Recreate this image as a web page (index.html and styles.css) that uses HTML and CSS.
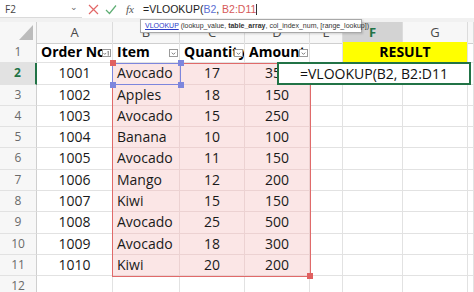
FILE: index.html
```html
<!DOCTYPE html>
<html lang="en">
<head>
    <meta charset="UTF-8">
    <title>VLOOKUP</title>
    <link rel="stylesheet" href="styles.css">
</head>
<body>
<div class="app">
    <!-- formula bar -->
    <div class="fbar">
        <div class="namebox"><span>F2</span><span class="caret">&#8964;</span></div>
        <div class="fbtns">
            <svg class="ico" width="11" height="11" viewBox="0 0 11 11"><path d="M1 1 L10 10 M10 1 L1 10" stroke="#e26868" stroke-width="1.2" fill="none"/></svg>
            <svg class="ico" width="12" height="11" viewBox="0 0 12 11"><path d="M1 6 L4.5 9.5 L11 1.5" stroke="#5fae74" stroke-width="1.2" fill="none"/></svg>
            <span class="fx">fx</span>
        </div>
        <div class="finput">=VLOOKUP(<span class="ref-b">B2</span>, <span class="ref-r">B2:D11</span><span class="cursor"></span></div>
    </div>
    <div class="tip"><span class="fn">VLOOKUP</span> (lookup_value, <b>table_array</b>, col_index_num, [range_lookup])</div>
    <div class="band"></div>

    <div class="sheet">
        <div class="row hdr">
            <div class="rh corner"><svg width="16" height="17" viewBox="0 0 16 17"><polygon points="15,1 15,16 1,16" fill="#bcbcbc"/></svg></div>
            <div class="ch">A</div><div class="ch">B</div><div class="ch">C</div><div class="ch">D</div>
            <div class="ch">E</div><div class="ch sel">F</div><div class="ch">G</div><div class="ch"></div>
        </div>
        <div class="row">
            <div class="rh">1</div>
            <div class="c th">Order No<span class="flt"><svg width="8" height="7" viewBox="0 0 8 7"><path d="M0.5 3 L2 4.5 L3.5 3" stroke="#444" stroke-width="0.8" fill="none"/><path d="M6 1 V6 M5 2 L6 1" stroke="#444" stroke-width="0.8" fill="none"/></svg></span></div>
            <div class="c th">Item<span class="flt"><svg width="8" height="7" viewBox="0 0 8 7"><path d="M2 2.5 L4 4.5 L6 2.5" stroke="#444" stroke-width="0.8" fill="none"/></svg></span></div>
            <div class="c th">Quantity<span class="flt"><svg width="8" height="7" viewBox="0 0 8 7"><path d="M2 2.5 L4 4.5 L6 2.5" stroke="#444" stroke-width="0.8" fill="none"/></svg></span></div>
            <div class="c th">Amount<span class="flt"><svg width="8" height="7" viewBox="0 0 8 7"><path d="M2 2.5 L4 4.5 L6 2.5" stroke="#444" stroke-width="0.8" fill="none"/></svg></span></div>
            <div class="c"></div>
            <div class="c result">RESULT</div>
            <div class="c"></div>
        </div>
        <div class="row">
            <div class="rh on">2</div>
            <div class="c n">1001</div><div class="c p">Avocado</div><div class="c p n">17</div><div class="c p n">350</div>
            <div class="c"></div><div class="c"></div><div class="c"></div><div class="c"></div>
        </div>
        <div class="row">
            <div class="rh">3</div>
            <div class="c n">1002</div><div class="c p">Apples</div><div class="c p n">18</div><div class="c p n">150</div>
            <div class="c"></div><div class="c"></div><div class="c"></div><div class="c"></div>
        </div>
        <div class="row">
            <div class="rh">4</div>
            <div class="c n">1003</div><div class="c p">Avocado</div><div class="c p n">15</div><div class="c p n">250</div>
            <div class="c"></div><div class="c"></div><div class="c"></div><div class="c"></div>
        </div>
        <div class="row">
            <div class="rh">5</div>
            <div class="c n">1004</div><div class="c p">Banana</div><div class="c p n">10</div><div class="c p n">100</div>
            <div class="c"></div><div class="c"></div><div class="c"></div><div class="c"></div>
        </div>
        <div class="row">
            <div class="rh">6</div>
            <div class="c n">1005</div><div class="c p">Avocado</div><div class="c p n">11</div><div class="c p n">150</div>
            <div class="c"></div><div class="c"></div><div class="c"></div><div class="c"></div>
        </div>
        <div class="row">
            <div class="rh">7</div>
            <div class="c n">1006</div><div class="c p">Mango</div><div class="c p n">12</div><div class="c p n">200</div>
            <div class="c"></div><div class="c"></div><div class="c"></div><div class="c"></div>
        </div>
        <div class="row">
            <div class="rh">8</div>
            <div class="c n">1007</div><div class="c p">Kiwi</div><div class="c p n">15</div><div class="c p n">150</div>
            <div class="c"></div><div class="c"></div><div class="c"></div><div class="c"></div>
        </div>
        <div class="row">
            <div class="rh">9</div>
            <div class="c n">1008</div><div class="c p">Avocado</div><div class="c p n">25</div><div class="c p n">500</div>
            <div class="c"></div><div class="c"></div><div class="c"></div><div class="c"></div>
        </div>
        <div class="row">
            <div class="rh">10</div>
            <div class="c n">1009</div><div class="c p">Avocado</div><div class="c p n">18</div><div class="c p n">300</div>
            <div class="c"></div><div class="c"></div><div class="c"></div><div class="c"></div>
        </div>
        <div class="row">
            <div class="rh">11</div>
            <div class="c n">1010</div><div class="c p">Kiwi</div><div class="c p n">20</div><div class="c p n">200</div>
            <div class="c"></div><div class="c"></div><div class="c"></div><div class="c"></div>
        </div>
        <div class="row">
            <div class="rh">12</div>
            <div class="c"></div><div class="c"></div><div class="c"></div><div class="c"></div>
            <div class="c"></div><div class="c"></div><div class="c"></div><div class="c"></div>
        </div>

        <!-- reference highlights drawn over the grid -->
        <div class="range"></div>
        <div class="b2box"></div>
        <div class="hd red tl"></div>
        <div class="hd red br"></div>
        <div class="hd blue b2tr"></div>
        <div class="hd blue b2bl"></div>
        <div class="hd blue b2br"></div>

        <div class="editor">=VLOOKUP(B2, B2:D11</div>
    </div>
</div>
</body>
</html>
```

FILE: styles.css
```css
body {
    margin: 0;
    background: #fff;
    font-family: "Open Sans", sans-serif;
    color: #222;
    overflow: hidden;
}
.app {
    position: relative;
    width: 474px;
    height: 292px;
    overflow: hidden;
}

/* formula bar */
.fbar {
    display: flex;
    align-items: center;
    height: 18px;
    font-size: 10px;
    background: #fff;
}
.namebox {
    width: 82px;
    display: flex;
    justify-content: space-between;
    align-items: center;
    padding: 0 4px 0 5px;
    box-sizing: border-box;
    color: #444;
    height: 18px;
    border-bottom: 1px solid #dadada;
}
.caret {
    font-size: 9px;
    color: #666;
    margin-top: -5px;
}
.fbtns {
    width: 58px;
    display: flex;
    align-items: center;
    gap: 6px;
    padding-left: 6px;
    box-sizing: border-box;
}
.fx {
    font-family: "Liberation Serif", serif;
    font-style: italic;
    font-size: 11px;
    color: #555;
    margin-left: 3px;
}
.finput {
    flex: 1;
    height: 18px;
    line-height: 18px;
    padding-left: 3px;
    font-family: "Liberation Sans", sans-serif;
    font-size: 10.5px;
    color: #222;
}
.ref-b { color: #5c6fd3; }
.ref-r { color: #d65a5a; }
.cursor {
    display: inline-block;
    width: 1px;
    height: 11px;
    background: #333;
    vertical-align: -2px;
}

/* function tooltip */
.tip {
    position: absolute;
    left: 140px;
    top: 19px;
    width: 222px;
    height: 14px;
    box-sizing: border-box;
    border: 1px solid #a8a8a8;
    background: #fff;
    font-family: "Liberation Sans", sans-serif;
    font-size: 7px;
    line-height: 12px;
    padding-left: 4px;
    color: #333;
    white-space: nowrap;
    z-index: 5;
    box-shadow: 1px 1px 2px rgba(0,0,0,0.15);
}
.tip .fn {
    color: #2b3bc8;
    text-decoration: underline;
}
.band {
    height: 4px;
    background: #f1f1f1;
}

/* grid */
.sheet {
    position: relative;
}
.row {
    display: grid;
    grid-template-columns: 37px 76px 67px 65px 65px 33px 60px 65px 1fr;
    height: 21.3px;
}
.row.hdr {
    height: 20px;
}
.rh {
    background: #f7f7f7;
    border-right: 1px solid #cfcfcf;
    border-bottom: 1px solid #e2e2e2;
    box-sizing: border-box;
    text-align: center;
    font-size: 12px;
    line-height: 20px;
    color: #6a6a6a;
}
.rh.on {
    background: #e2e2e2;
    color: #217346;
    font-weight: bold;
    border-right: 2px solid #217346;
}
.corner {
    display: flex;
    justify-content: flex-end;
    align-items: flex-end;
    padding: 0 2px 2px 0;
    background: #f7f7f7;
    border-bottom: 1px solid #cfcfcf;
}
.ch {
    background: #f7f7f7;
    border-right: 1px solid #dcdcdc;
    border-bottom: 1px solid #cfcfcf;
    box-sizing: border-box;
    text-align: center;
    font-size: 13px;
    line-height: 20px;
    color: #4a4a4a;
}
.ch.sel {
    background: #d3d3d3;
    color: #217346;
    font-weight: bold;
    border-bottom: 2px solid #217346;
}
.c {
    position: relative;
    border-right: 1px solid #e2e2e2;
    border-bottom: 1px solid #e2e2e2;
    box-sizing: border-box;
    font-size: 14px;
    line-height: 20px;
    padding-left: 4px;
    white-space: nowrap;
    overflow: hidden;
    color: #1a1a1a;
}
.c.n {
    text-align: center;
    padding-left: 0;
}
.c.p {
    background: #fbe6e6;
    border-color: #ecd2d2;
}
.c.th {
    font-weight: bold;
    color: #000;
}
.flt {
    position: absolute;
    right: 1px;
    bottom: 5px;
    width: 9px;
    height: 8px;
    box-sizing: border-box;
    border: 1px solid #9a9a9a;
    background: #fff;
    display: flex;
    align-items: center;
    justify-content: center;
}
.result {
    grid-column: span 2;
    background: #ffff00;
    font-weight: bold;
    text-align: center;
    color: #000;
    padding-left: 0;
}

/* range highlights */
.range {
    position: absolute;
    left: 112px;
    top: 40.5px;
    width: 198.5px;
    height: 214px;
    box-sizing: border-box;
    border: 1.5px solid #e06a6a;
}
.b2box {
    position: absolute;
    left: 112px;
    top: 40.5px;
    width: 69px;
    height: 22.5px;
    box-sizing: border-box;
    border: 1.5px solid #7d86dd;
}
.hd {
    position: absolute;
    width: 6px;
    height: 6px;
}
.hd.red { background: #e06060; }
.hd.blue { background: #7d86dd; }
.tl { left: 110px; top: 38px; }
.br { left: 307px; top: 251px; }
.b2tr { left: 178px; top: 38px; }
.b2bl { left: 110px; top: 60px; }
.b2br { left: 178px; top: 60px; }

/* in-cell editor */
.editor {
    position: absolute;
    left: 277px;
    top: 40px;
    width: 194px;
    height: 23px;
    box-sizing: border-box;
    border: 2px solid #217346;
    background: #fff;
    font-size: 14px;
    line-height: 19px;
    text-align: center;
    color: #111;
}
```
